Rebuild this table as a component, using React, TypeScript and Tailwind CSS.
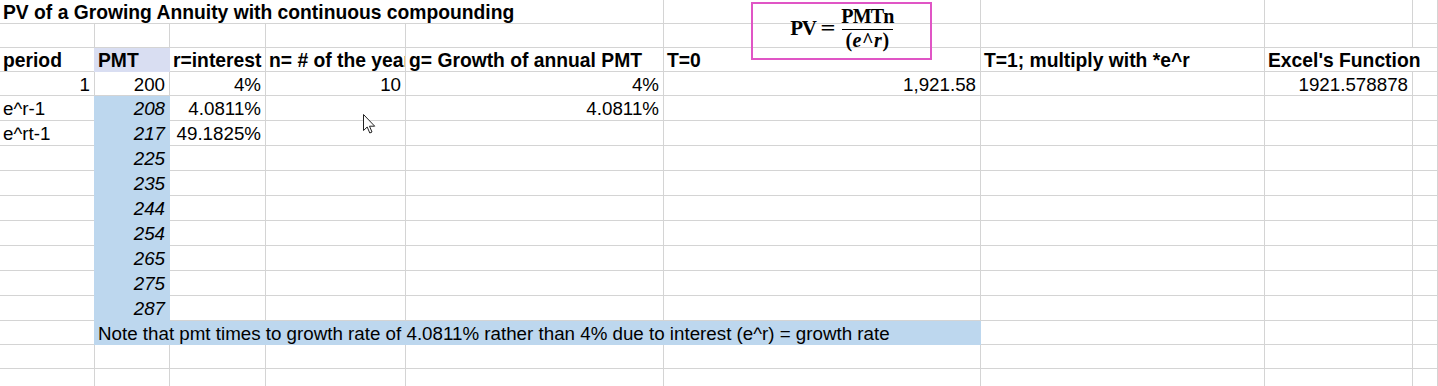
import type { ReactNode } from 'react'

type Fill = 'blue' | 'lav' | undefined

type CellDef = {
  text?: string
  right?: boolean
  bold?: boolean
  italic?: boolean
  fill?: Fill
  span?: 2 | 5
}

const TITLE = 'PV of a Growing Annuity with continuous compounding'
const NOTE =
  'Note that pmt times to growth rate of 4.0811% rather than 4% due to interest (e^r) = growth rate'

const empty = (n: number): CellDef[] => Array.from({ length: n }, () => ({}))

const pmtRow = (v: string): CellDef[] => [
  {},
  { text: v, right: true, italic: true, fill: 'blue' },
  ...empty(7),
]

// rows of the sheet; 25px rows get one pixel more bottom padding
const ROWS: { tall?: boolean; cells: CellDef[] }[] = [
  { cells: [{ text: TITLE, bold: true, span: 5 }, ...empty(4)] },
  { cells: empty(9) },
  {
    cells: [
      { text: 'period', bold: true },
      { text: 'PMT', bold: true, fill: 'lav' },
      { text: 'r=interest', bold: true },
      { text: 'n= # of the years', bold: true },
      { text: 'g= Growth of annual PMT', bold: true },
      { text: 'T=0', bold: true },
      { text: 'T=1; multiply with *e^r', bold: true },
      // empty neighbour, so the label runs on over column I
      { text: "Excel's Function", bold: true, span: 2 },
    ],
  },
  {
    cells: [
      { text: '1', right: true },
      { text: '200', right: true },
      { text: '4%', right: true },
      { text: '10', right: true },
      { text: '4%', right: true },
      { text: '1,921.58', right: true },
      {},
      { text: '1921.578878', right: true },
      {},
    ],
  },
  {
    tall: true,
    cells: [
      { text: 'e^r-1' },
      { text: '208', right: true, italic: true, fill: 'blue' },
      { text: '4.0811%', right: true },
      {},
      { text: '4.0811%', right: true },
      ...empty(4),
    ],
  },
  {
    tall: true,
    cells: [
      { text: 'e^rt-1' },
      { text: '217', right: true, italic: true, fill: 'blue' },
      { text: '49.1825%', right: true },
      ...empty(6),
    ],
  },
  ...['225', '235', '244', '254', '265', '275', '287'].map((v) => ({
    tall: true,
    cells: pmtRow(v),
  })),
  {
    cells: [{}, { text: NOTE, fill: 'blue' as Fill, span: 5 as const }, ...empty(3)],
  },
  { cells: empty(9) },
  { cells: empty(9) },
]

function Cell({ def, tall }: { def: CellDef; tall?: boolean }) {
  const fillCls =
    def.fill === 'blue'
      ? '-ml-px border-[#bdd7ee] bg-[#bdd7ee]'
      : def.fill === 'lav'
        ? '-ml-px border-[#d9def2] bg-[#d9def2]'
        : 'border-[#d4d4d4]'
  const spanCls = def.span === 5 ? 'col-span-5' : def.span === 2 ? 'col-span-2' : ''
  return (
    <div
      className={`flex min-w-0 items-end overflow-hidden whitespace-nowrap border-b border-r leading-[21px] ${fillCls} ${spanCls} ${
        def.right ? 'justify-end pr-[4px]' : def.fill ? 'pl-[4px]' : 'pl-[3px]'
      } ${tall ? 'pb-px' : ''} ${def.bold ? 'text-[19.3px] font-bold' : ''} ${
        def.italic ? 'italic' : ''
      }`}
    >
      {def.text}
    </div>
  )
}

function Fraction({ top, bottom }: { top: ReactNode; bottom: ReactNode }) {
  return (
    <div className="flex flex-col items-center">
      <div className="text-[20px] leading-[21px]">{top}</div>
      <div className="mt-[2px] h-px w-[51px] bg-black" />
      <div className="text-[20px] leading-[21px]">{bottom}</div>
    </div>
  )
}

function FormulaBox() {
  return (
    <div className="absolute left-[751px] top-[2px] h-[58px] w-[181px] border-2 border-[#e055c5]">
      <div className="flex h-full items-center justify-center pb-[5px] pl-[1px] font-['Liberation_Serif',serif] font-bold text-black">
        <span className="text-[21px] tracking-[-1.5px]">PV</span>
        <span className="mx-[7px] inline-block scale-x-125 text-[21px]">=</span>
        <Fraction
          top={<span className="tracking-[-0.8px]">PMTn</span>}
          bottom={
            <span className="tracking-[0.5px]">
              (<i>e</i>^<i>r</i>)
            </span>
          }
        />
      </div>
    </div>
  )
}

function Pointer() {
  return (
    <svg
      className="absolute left-[362px] top-[113px]"
      width="15"
      height="22"
      viewBox="0 0 15 22"
    >
      <path
        d="M1.5 1.5 L1.5 17.5 L5.2 14 L7.8 20 L10 19 L7.5 13.2 L12.7 13.2 Z"
        fill="white"
        stroke="#222"
        strokeWidth="1"
        strokeLinejoin="miter"
      />
    </svg>
  )
}

export default function App() {
  return (
    <div className="relative h-[386px] w-[1438px] overflow-hidden bg-white font-['Liberation_Sans',Arial,sans-serif] text-[18.75px] text-black">
      <div className="grid grid-cols-[95px_75px_96px_140px_258px_317px_284px_148px_1fr] grid-rows-[24px_24px_24px_24px_25px_25px_25px_25px_25px_25px_25px_25px_25px_24px_24px_24px]">
        {ROWS.map((row, r) =>
          row.cells.map((c, i) => <Cell key={`${r}-${i}`} def={c} tall={row.tall} />),
        )}
      </div>
      <FormulaBox />
      <Pointer />
    </div>
  )
}
